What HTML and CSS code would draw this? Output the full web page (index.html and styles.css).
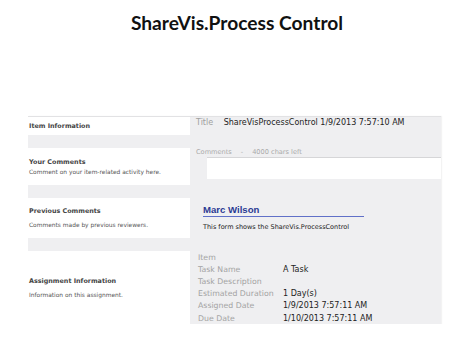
FILE: index.html
```html
<!DOCTYPE html>
<html lang="en">
<head>
    <meta charset="UTF-8">
    <meta name="viewport" content="width=device-width, initial-scale=1.0">
    <title>ShareVis.Process Control</title>
    <link rel="stylesheet" href="styles.css">
</head>
<body>
  <h1 class="page-title">ShareVis.Process Control</h1>
  <div class="form">
    <div class="row row-item">
      <div class="side">
        <h3>Item Information</h3>
      </div>
      <div class="main">
        <span class="label">Title</span>
        <span class="value">ShareVisProcessControl 1/9/2013 7:57:10 AM</span>
      </div>
    </div>
    <div class="row row-comments">
      <div class="side tight">
        <h3>Your Comments</h3>
        <p>Comment on your item-related activity here.</p>
      </div>
      <div class="main">
        <div class="comments-head">
          <span>Comments</span><span class="dash">-</span><span>4000 chars left</span>
        </div>
        <textarea class="comment-box"></textarea>
      </div>
    </div>
    <div class="row row-previous">
      <div class="side">
        <h3>Previous Comments</h3>
        <p>Comments made by previous reviewers.</p>
      </div>
      <div class="main">
        <div class="author">Marc Wilson</div>
        <p class="note">This form shows the ShareVis.ProcessControl</p>
      </div>
    </div>
    <div class="row row-assign">
      <div class="side">
        <h3>Assignment Information</h3>
        <p>Information on this assignment.</p>
      </div>
      <div class="main">
        <table class="details">
          <tr><td>Item</td><td></td></tr>
          <tr><td>Task Name</td><td>A Task</td></tr>
          <tr><td>Task Description</td><td></td></tr>
          <tr><td>Estimated Duration</td><td>1 Day(s)</td></tr>
          <tr><td>Assigned Date</td><td>1/9/2013 7:57:11 AM</td></tr>
          <tr><td>Due Date</td><td>1/10/2013 7:57:11 AM</td></tr>
        </table>
      </div>
    </div>
  </div>
</body>
</html>
```

FILE: styles.css
```css
*{
    margin: 0;
    padding: 0;
    box-sizing: border-box;
}
body{
    background-color: #fff;
    font-family: "DejaVu Sans", Verdana, sans-serif;
    color: #333;
}
.page-title{
    font-family: Lato, "Open Sans", sans-serif;
    font-weight: 700;
    font-size: 19.2px;
    line-height: 46px;
    text-align: center;
    color: #111;
}
.form{
    margin: 70px 0 0 28px;
    width: 413px;
    background-color: #efeff1;
    border-top: 1px solid #e2e2e4;
    display: flex;
    flex-direction: column;
    gap: 13px;
    box-shadow: 1px 0 1px #f3f3f3;
}
.row{
    display: flex;
}
.row-item{ height: 18px; }
.row-comments{ height: 37px; }
.row-previous{ height: 40px; }
.row-assign{ height: 73px; }
.side{
    width: 162px;
    background-color: #fff;
    padding-left: 1px;
    display: flex;
    flex-direction: column;
    justify-content: center;
}
.side h3{
    font-size: 6.4px;
    line-height: 10px;
    font-weight: 700;
    color: #444;
}
.side p{
    font-size: 5.9px;
    line-height: 10px;
    margin-top: 4px;
    color: #555;
}
.side.tight p{
    margin-top: 0;
}
.main{
    flex: 1;
}
.row-item .main{
    padding: 1px 0 0 6px;
    font-size: 8px;
    line-height: 10px;
}
.label{
    color: #a0a0a0;
    margin-right: 8px;
}
.value{
    color: #222;
}
.comments-head{
    padding: 0 0 0 6px;
    margin-top: -1px;
    font-size: 6.6px;
    line-height: 10px;
    color: #aaa;
}
.dash{
    margin: 0 9px;
}
.comment-box{
    display: block;
    margin: 0 0 0 17px;
    width: 234px;
    height: 22px;
    border: none;
    border-top: 1px solid #d6d6d8;
    background-color: #fff;
    resize: none;
}
.row-previous .main{
    padding: 6px 0 0 13px;
}
.author{
    font-family: "Liberation Sans", Arial, sans-serif;
    font-weight: 700;
    font-size: 9.6px;
    line-height: 12px;
    color: #2b3a93;
    width: 161px;
    border-bottom: 1px solid #6070c8;
}
.note{
    font-size: 6.5px;
    line-height: 10px;
    margin-top: 5px;
    color: #222;
}
.row-assign .main{
    padding: 0 0 0 8px;
}
.details{
    border-collapse: collapse;
    font-size: 7.8px;
}
.details td{
    height: 12.2px;
    padding: 0;
    color: #222;
    font-size: 8px;
}
.details td:first-child{
    width: 85px;
    color: #a3a3a3;
    font-size: 7.8px;
}
```
